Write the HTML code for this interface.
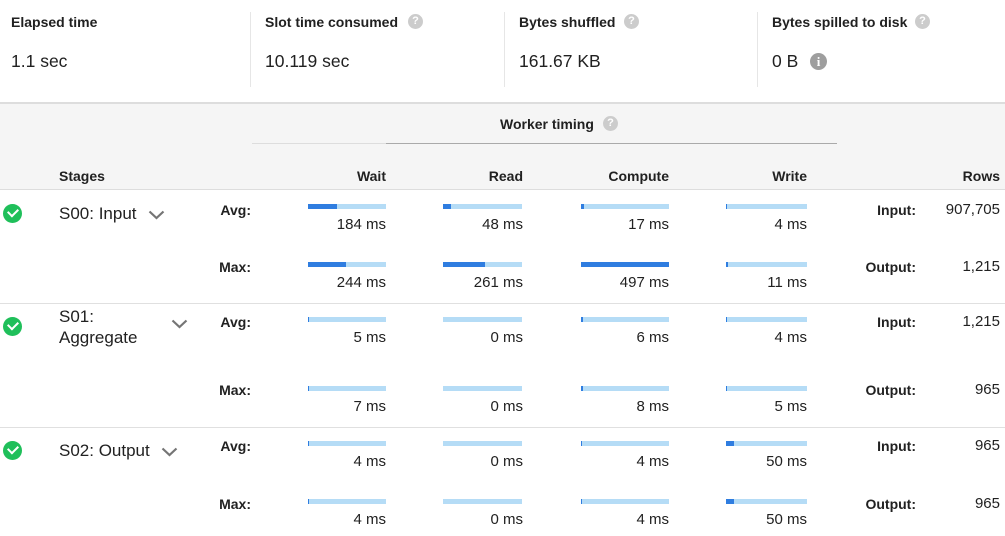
<!DOCTYPE html>
<html><head><meta charset="utf-8"><style>
*{margin:0;padding:0;box-sizing:border-box}
body{width:1005px;height:536px;background:#fff;font-family:"Liberation Sans",Roboto,sans-serif;color:#212121;position:relative;overflow:hidden}
.a{position:absolute;white-space:nowrap}
.h{font-size:14px;font-weight:bold;color:#212121}
.big{font-size:17.5px}
.q{position:absolute;width:15px;height:15px;border-radius:50%;background:#ccc;color:#fff;font-size:11px;font-weight:bold;text-align:center;line-height:15px}
.vl{position:absolute;top:12px;width:1px;height:75px;background:#e6e6e6}
.bar{position:absolute;height:5px;background:#b5dcf6}
.bar i{position:absolute;left:0;top:0;height:5px;background:#2f7de0}
.v{position:absolute;font-size:15px;text-align:right;white-space:nowrap}
.lb{position:absolute;font-size:14px;font-weight:bold;text-align:right}
.rl{position:absolute;width:1005px;left:0;height:1px;background:#e0e0e0}
.ck{position:absolute;left:3px;width:19px;height:19px;border-radius:50%;background:#1fbf5a}
.ck:after{content:"";position:absolute;left:5px;top:4px;width:8px;height:5px;border-left:2.5px solid #fff;border-bottom:2.5px solid #fff;transform:rotate(-45deg)}
.chev{position:absolute;width:17px;height:10px}
.st{position:absolute;left:59px;font-size:17px;line-height:21px;white-space:nowrap}
</style></head><body>
<div class="a h" style="left:11px;top:14px">Elapsed time</div>
<div class="a big" style="left:11px;top:51px">1.1 sec</div>
<div class="vl" style="left:250px"></div>
<div class="a h" style="left:265px;top:14px">Slot time consumed</div><div class="q" style="left:408px;top:14px">?</div>
<div class="a big" style="left:265px;top:51px">10.119 sec</div>
<div class="vl" style="left:504px"></div>
<div class="a h" style="left:519px;top:14px">Bytes shuffled</div><div class="q" style="left:624px;top:14px">?</div>
<div class="a big" style="left:519px;top:51px">161.67 KB</div>
<div class="vl" style="left:757px"></div>
<div class="a h" style="left:772px;top:14px">Bytes spilled to disk</div><div class="q" style="left:915px;top:14px">?</div>
<div class="a big" style="left:772px;top:51px">0 B</div><div class="q" style="left:810px;top:53px;width:17px;height:17px;line-height:17px;background:#9e9e9e;font-family:'Liberation Serif',serif;font-size:13px">i</div>

<div class="a" style="left:0;top:102px;width:1005px;height:88px;background:#f5f5f5;border-top:2px solid #ddd;border-bottom:1px solid #ddd"></div>
<div class="a h" style="left:500px;top:116px">Worker timing</div><div class="q" style="left:603px;top:116px">?</div>
<div class="a" style="left:252px;top:143px;width:134px;height:1px;background:#ddd"></div>
<div class="a" style="left:386px;top:143px;width:451px;height:1px;background:#aaa"></div>
<div class="a h" style="left:59px;top:168px">Stages</div>
<div class="lb" style="left:300px;width:86px;top:168px">Wait</div>
<div class="lb" style="left:430px;width:93px;top:168px">Read</div>
<div class="lb" style="left:560px;width:109px;top:168px">Compute</div>
<div class="lb" style="left:720px;width:87px;top:168px">Write</div>
<div class="lb" style="left:900px;width:100px;top:168px">Rows</div>

<div class="rl" style="top:303px"></div>
<div class="rl" style="top:427px"></div>

<div class="ck" style="top:204px"></div><div class="st" style="top:203px">S00: Input</div>
<svg class="chev" style="left:148px;top:210px" viewBox="0 0 17 10"><polyline points="1.5,1.5 8.5,8 15.5,1.5" fill="none" stroke="#757575" stroke-width="2.2"/></svg>
<div class="ck" style="top:317px"></div><div class="st" style="top:306px">S01:<br>Aggregate</div>
<svg class="chev" style="left:171px;top:319px" viewBox="0 0 17 10"><polyline points="1.5,1.5 8.5,8 15.5,1.5" fill="none" stroke="#757575" stroke-width="2.2"/></svg>
<div class="ck" style="top:441px"></div><div class="st" style="top:440px">S02: Output</div>
<svg class="chev" style="left:161px;top:447px" viewBox="0 0 17 10"><polyline points="1.5,1.5 8.5,8 15.5,1.5" fill="none" stroke="#757575" stroke-width="2.2"/></svg>

<!-- row1 avg -->
<div class="lb" style="left:150px;width:101px;top:202px">Avg:</div>
<div class="bar" style="left:308px;top:204px;width:78px"><i style="width:29px"></i></div><div class="v" style="left:300px;width:86px;top:216px">184 ms</div>
<div class="bar" style="left:443px;top:204px;width:79px"><i style="width:8px"></i></div><div class="v" style="left:430px;width:93px;top:216px">48 ms</div>
<div class="bar" style="left:581px;top:204px;width:88px"><i style="width:3px"></i></div><div class="v" style="left:560px;width:109px;top:216px">17 ms</div>
<div class="bar" style="left:726px;top:204px;width:81px"><i style="width:1px"></i></div><div class="v" style="left:720px;width:87px;top:216px">4 ms</div>
<div class="lb" style="left:800px;width:116px;top:202px">Input:</div><div class="v" style="left:900px;width:100px;top:201px">907,705</div>
<!-- row1 max -->
<div class="lb" style="left:150px;width:101px;top:259px">Max:</div>
<div class="bar" style="left:308px;top:262px;width:78px"><i style="width:38px"></i></div><div class="v" style="left:300px;width:86px;top:274px">244 ms</div>
<div class="bar" style="left:443px;top:262px;width:79px"><i style="width:42px"></i></div><div class="v" style="left:430px;width:93px;top:274px">261 ms</div>
<div class="bar" style="left:581px;top:262px;width:88px"><i style="width:88px"></i></div><div class="v" style="left:560px;width:109px;top:274px">497 ms</div>
<div class="bar" style="left:726px;top:262px;width:81px"><i style="width:2px"></i></div><div class="v" style="left:720px;width:87px;top:274px">11 ms</div>
<div class="lb" style="left:800px;width:116px;top:259px">Output:</div><div class="v" style="left:900px;width:100px;top:258px">1,215</div>
<!-- row2 avg -->
<div class="lb" style="left:150px;width:101px;top:314px">Avg:</div>
<div class="bar" style="left:308px;top:317px;width:78px"><i style="width:1px"></i></div><div class="v" style="left:300px;width:86px;top:329px">5 ms</div>
<div class="bar" style="left:443px;top:317px;width:79px"></div><div class="v" style="left:430px;width:93px;top:329px">0 ms</div>
<div class="bar" style="left:581px;top:317px;width:88px"><i style="width:2px"></i></div><div class="v" style="left:560px;width:109px;top:329px">6 ms</div>
<div class="bar" style="left:726px;top:317px;width:81px"><i style="width:1px"></i></div><div class="v" style="left:720px;width:87px;top:329px">4 ms</div>
<div class="lb" style="left:800px;width:116px;top:314px">Input:</div><div class="v" style="left:900px;width:100px;top:313px">1,215</div>
<!-- row2 max -->
<div class="lb" style="left:150px;width:101px;top:382px">Max:</div>
<div class="bar" style="left:308px;top:386px;width:78px"><i style="width:1px"></i></div><div class="v" style="left:300px;width:86px;top:398px">7 ms</div>
<div class="bar" style="left:443px;top:386px;width:79px"></div><div class="v" style="left:430px;width:93px;top:398px">0 ms</div>
<div class="bar" style="left:581px;top:386px;width:88px"><i style="width:2px"></i></div><div class="v" style="left:560px;width:109px;top:398px">8 ms</div>
<div class="bar" style="left:726px;top:386px;width:81px"><i style="width:1px"></i></div><div class="v" style="left:720px;width:87px;top:398px">5 ms</div>
<div class="lb" style="left:800px;width:116px;top:382px">Output:</div><div class="v" style="left:900px;width:100px;top:381px">965</div>
<!-- row3 avg -->
<div class="lb" style="left:150px;width:101px;top:438px">Avg:</div>
<div class="bar" style="left:308px;top:441px;width:78px"><i style="width:1px"></i></div><div class="v" style="left:300px;width:86px;top:453px">4 ms</div>
<div class="bar" style="left:443px;top:441px;width:79px"></div><div class="v" style="left:430px;width:93px;top:453px">0 ms</div>
<div class="bar" style="left:581px;top:441px;width:88px"><i style="width:1px"></i></div><div class="v" style="left:560px;width:109px;top:453px">4 ms</div>
<div class="bar" style="left:726px;top:441px;width:81px"><i style="width:8px"></i></div><div class="v" style="left:720px;width:87px;top:453px">50 ms</div>
<div class="lb" style="left:800px;width:116px;top:438px">Input:</div><div class="v" style="left:900px;width:100px;top:437px">965</div>
<!-- row3 max -->
<div class="lb" style="left:150px;width:101px;top:496px">Max:</div>
<div class="bar" style="left:308px;top:499px;width:78px"><i style="width:1px"></i></div><div class="v" style="left:300px;width:86px;top:511px">4 ms</div>
<div class="bar" style="left:443px;top:499px;width:79px"></div><div class="v" style="left:430px;width:93px;top:511px">0 ms</div>
<div class="bar" style="left:581px;top:499px;width:88px"><i style="width:1px"></i></div><div class="v" style="left:560px;width:109px;top:511px">4 ms</div>
<div class="bar" style="left:726px;top:499px;width:81px"><i style="width:8px"></i></div><div class="v" style="left:720px;width:87px;top:511px">50 ms</div>
<div class="lb" style="left:800px;width:116px;top:496px">Output:</div><div class="v" style="left:900px;width:100px;top:495px">965</div>
</body></html>
